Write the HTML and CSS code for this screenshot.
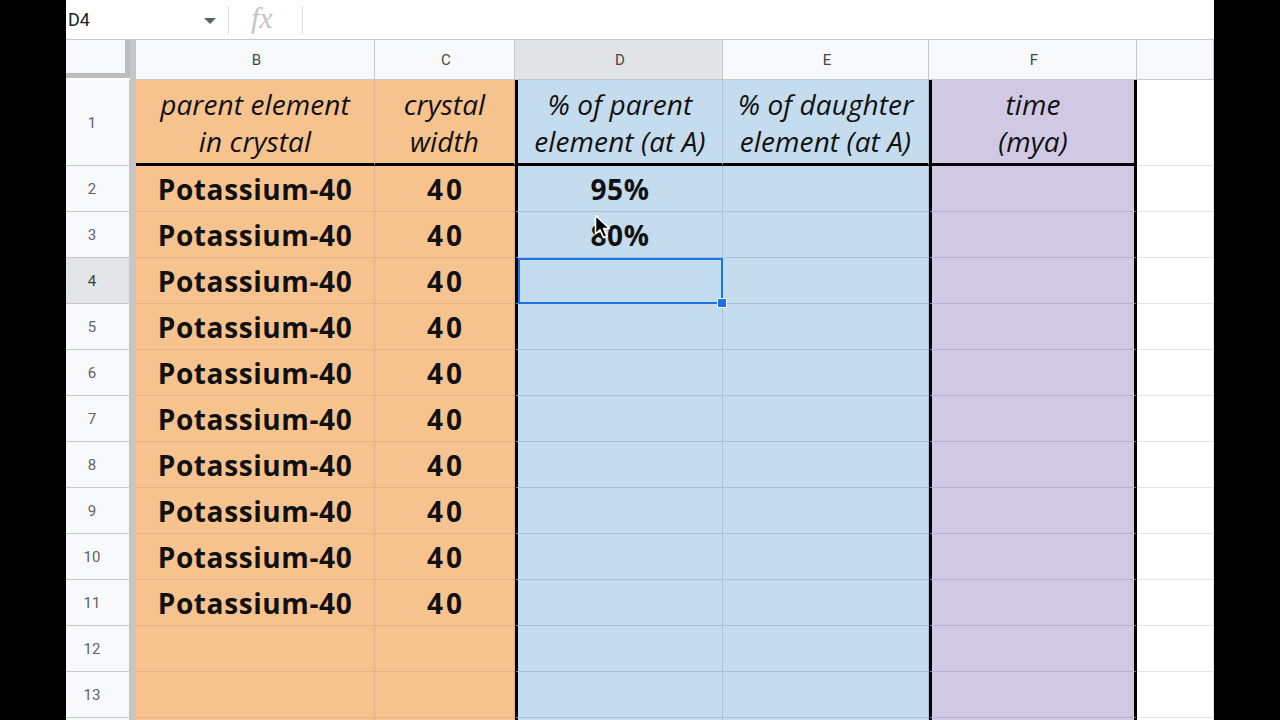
FILE: index.html
```html
<!DOCTYPE html>
<html>
<head>
<meta charset="utf-8">
<link rel="stylesheet" href="styles.css">
</head>
<body>
<div class="screen">
  <div class="sheet">
    <div class="fbar">
      <div class="namebox"><span class="cellref">D4</span><span class="caret"></span></div>
      <div class="sep"></div>
      <div class="fx">fx</div>
      <div class="sep"></div>
    </div>

    <div class="grid-row colhdr">
      <div class="cell corner"></div><div class="fz"></div>
      <div class="cell ch">B</div><div class="cell ch">C</div><div class="cell ch sel">D</div><div class="cell ch">E</div><div class="cell ch">F</div><div class="cell ch"></div>
    </div>

    <div class="grid-row r1">
      <div class="cell rh">1</div><div class="fz"></div>
      <div class="cell or hd tb">parent element<br>in crystal</div>
      <div class="cell or hd tb">crystal<br>width</div>
      <div class="cell bl hd tl tb">% of parent<br>element (at A)</div>
      <div class="cell bl hd tb">% of daughter<br>element (at A)</div>
      <div class="cell pu hd tl trr tb">time<br>(mya)</div>
      <div class="cell wh"></div>
    </div>

    <div class="grid-row">
      <div class="cell rh">2</div><div class="fz"></div>
      <div class="cell or val">Potassium-40</div><div class="cell or val num">40</div>
      <div class="cell bl val tl">95%</div><div class="cell bl"></div><div class="cell pu tl trr"></div><div class="cell wh"></div>
    </div>
    <div class="grid-row">
      <div class="cell rh">3</div><div class="fz"></div>
      <div class="cell or val">Potassium-40</div><div class="cell or val num">40</div>
      <div class="cell bl val tl pin">80%<svg class="pointer" width="20" height="26" viewBox="0 0 20 26"><path d="M1.5 1.5 L1.5 20 L6 15.8 L9.6 23.6 L13 22.1 L9.5 14.5 L15.5 14.5 Z" fill="#000" stroke="#fff" stroke-width="1.6" stroke-linejoin="round"/></svg></div>
      <div class="cell bl"></div><div class="cell pu tl trr"></div><div class="cell wh"></div>
    </div>
    <div class="grid-row">
      <div class="cell rh sel">4</div><div class="fz"></div>
      <div class="cell or val">Potassium-40</div><div class="cell or val num">40</div>
      <div class="cell bl tl pin"><div class="selbox"><span class="handle"></span></div></div>
      <div class="cell bl"></div><div class="cell pu tl trr"></div><div class="cell wh"></div>
    </div>
    <div class="grid-row">
      <div class="cell rh">5</div><div class="fz"></div>
      <div class="cell or val">Potassium-40</div><div class="cell or val num">40</div>
      <div class="cell bl tl"></div><div class="cell bl"></div><div class="cell pu tl trr"></div><div class="cell wh"></div>
    </div>
    <div class="grid-row">
      <div class="cell rh">6</div><div class="fz"></div>
      <div class="cell or val">Potassium-40</div><div class="cell or val num">40</div>
      <div class="cell bl tl"></div><div class="cell bl"></div><div class="cell pu tl trr"></div><div class="cell wh"></div>
    </div>
    <div class="grid-row">
      <div class="cell rh">7</div><div class="fz"></div>
      <div class="cell or val">Potassium-40</div><div class="cell or val num">40</div>
      <div class="cell bl tl"></div><div class="cell bl"></div><div class="cell pu tl trr"></div><div class="cell wh"></div>
    </div>
    <div class="grid-row">
      <div class="cell rh">8</div><div class="fz"></div>
      <div class="cell or val">Potassium-40</div><div class="cell or val num">40</div>
      <div class="cell bl tl"></div><div class="cell bl"></div><div class="cell pu tl trr"></div><div class="cell wh"></div>
    </div>
    <div class="grid-row">
      <div class="cell rh">9</div><div class="fz"></div>
      <div class="cell or val">Potassium-40</div><div class="cell or val num">40</div>
      <div class="cell bl tl"></div><div class="cell bl"></div><div class="cell pu tl trr"></div><div class="cell wh"></div>
    </div>
    <div class="grid-row">
      <div class="cell rh">10</div><div class="fz"></div>
      <div class="cell or val">Potassium-40</div><div class="cell or val num">40</div>
      <div class="cell bl tl"></div><div class="cell bl"></div><div class="cell pu tl trr"></div><div class="cell wh"></div>
    </div>
    <div class="grid-row">
      <div class="cell rh">11</div><div class="fz"></div>
      <div class="cell or val">Potassium-40</div><div class="cell or val num">40</div>
      <div class="cell bl tl"></div><div class="cell bl"></div><div class="cell pu tl trr"></div><div class="cell wh"></div>
    </div>
    <div class="grid-row">
      <div class="cell rh">12</div><div class="fz"></div>
      <div class="cell or"></div><div class="cell or"></div>
      <div class="cell bl tl"></div><div class="cell bl"></div><div class="cell pu tl trr"></div><div class="cell wh"></div>
    </div>
    <div class="grid-row">
      <div class="cell rh">13</div><div class="fz"></div>
      <div class="cell or"></div><div class="cell or"></div>
      <div class="cell bl tl"></div><div class="cell bl"></div><div class="cell pu tl trr"></div><div class="cell wh"></div>
    </div>
    <div class="grid-row">
      <div class="cell rh"></div><div class="fz"></div>
      <div class="cell or"></div><div class="cell or"></div>
      <div class="cell bl tl"></div><div class="cell bl"></div><div class="cell pu tl trr"></div><div class="cell wh"></div>
    </div>
  </div>
</div>
</body>
</html>
```

FILE: styles.css
```css
* { box-sizing: border-box; }
html, body { margin: 0; padding: 0; }
body {
  background: #000;
  font-family: "Open Sans", Lato, "DejaVu Sans", sans-serif;
  width: 1280px;
  height: 720px;
  overflow: hidden;
}
.screen {
  display: flex;
  justify-content: center;
  height: 720px;
  overflow: hidden;
}
.sheet {
  width: 1148px;
  background: #fff;
  overflow: hidden;
}

/* formula bar */
.fbar {
  height: 40px;
  border-bottom: 1px solid #c7c7c7;
  display: flex;
  align-items: center;
  background: #fff;
}
.namebox {
  width: 162px;
  height: 100%;
  display: flex;
  align-items: center;
  justify-content: space-between;
  padding-left: 2px;
  padding-right: 12px;
}
.cellref {
  font-family: Roboto, "Liberation Sans", sans-serif;
  font-size: 18px;
  color: #202124;
}
.caret {
  width: 0;
  height: 0;
  border-left: 6px solid transparent;
  border-right: 6px solid transparent;
  border-top: 6px solid #5f6368;
  margin-top: 2px;
}
.sep {
  width: 1px;
  height: 28px;
  background: #dadce0;
}
.fx {
  font-family: "Liberation Serif", "DejaVu Serif", serif;
  font-style: italic;
  font-size: 30px;
  color: #c4c4c4;
  width: 73px;
  padding-left: 22px;
  line-height: 1;
  margin-top: -4px;
}

/* grid */
.grid-row {
  display: grid;
  grid-template-columns: 64px 6px 239px 140px 208px 206px 208px 77px;
  height: 46px;
}
.grid-row.colhdr { height: 40px; }
.grid-row.r1 { height: 86px; }

.cell {
  display: flex;
  align-items: center;
  justify-content: center;
  border-right: 1px solid transparent;
  border-bottom: 1px solid transparent;
}
.fz { background: #c6c6c6; }

.corner {
  background: #f8f9fa;
  border-right: 5px solid #bdbdbd;
  border-bottom: 5px solid #bdbdbd;
  margin-bottom: 2px;
}
.ch {
  background: #f8f9fa;
  border-color: #c7c7c7;
  font-family: Roboto, "Liberation Sans", sans-serif;
  font-size: 15px;
  color: #444746;
  padding-left: 3px;
}
.ch.sel { background: #e1e3e6; }

.rh {
  background: #f8f9fa;
  border-color: #c7c7c7;
  font-family: Roboto, "Liberation Sans", sans-serif;
  font-size: 15px;
  color: #5f6368;
  padding-right: 11px;
}
.rh.sel { background: #e3e5e8; color: #3c4043; }

.or { background: #f6c28e; border-color: #e2b384; }
.bl { background: #c5dbee; border-color: #a9c0d6; }
.pu { background: #d1c9e3; border-color: #b9b1cc; }
.wh { background: #fff; border-color: #e2e2e2; }

.tl { border-left: 3px solid #000; }
.trr { border-right: 3px solid #000; }
.tb { border-bottom: 3px solid #000; }

.hd {
  font-style: italic;
  font-size: 28px;
  line-height: 37px;
  text-align: center;
  padding-top: 3px;
  color: #111;
  letter-spacing: 0.1px;
}
.val {
  font-weight: 700;
  font-size: 28px;
  color: #111;
  padding-top: 1px;
  letter-spacing: 0.6px;
}
.val.num { letter-spacing: 3px; padding-left: 3px; }

.pin { position: relative; }
.pointer {
  position: absolute;
  left: 76px;
  top: 2px;
}
.selbox {
  position: absolute;
  left: 0;
  top: 0;
  right: -1px;
  bottom: -1px;
  border: 2px solid #1a73e8;
}
.handle {
  position: absolute;
  right: -6px;
  bottom: -6px;
  width: 10px;
  height: 10px;
  background: #1a73e8;
  border: 1px solid #fff;
}
```
